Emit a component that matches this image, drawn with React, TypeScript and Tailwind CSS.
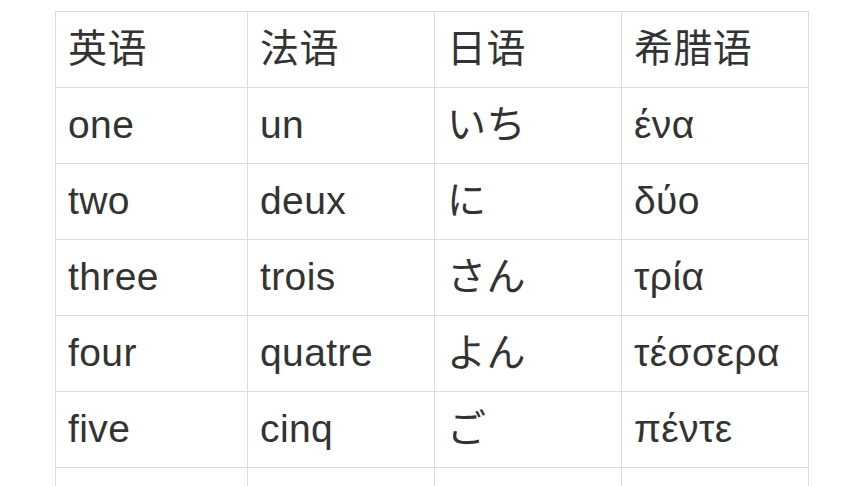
const rows: string[][] = [
  ["英语", "法语", "日语", "希腊语"],
  ["one", "un", "いち", "ένα"],
  ["two", "deux", "に", "δύο"],
  ["three", "trois", "さん", "τρία"],
  ["four", "quatre", "よん", "τέσσερα"],
  ["five", "cinq", "ご", "πέντε"],
  ["", "", "", ""],
];

const widths = ["w-[192px]", "w-[187px]", "w-[187px]", "w-[187px]"];

export default function App() {
  return (
    <div className="h-[486px] w-[864px] overflow-hidden bg-white pt-[11px] pl-[55px] font-['Liberation_Sans','Noto_Sans_CJK_SC',sans-serif] text-[#333333]">
      <table className="table-fixed border-collapse">
        <tbody>
          {rows.map((row, i) => (
            <tr key={i}>
              {row.map((cell, j) => (
                <td
                  key={j}
                  className={`${widths[j]} h-[76px] border border-[#dedede] pl-[12px] pb-[2px] align-middle text-[39px] leading-none tracking-[0.4px]`}
                >
                  {cell}
                </td>
              ))}
            </tr>
          ))}
        </tbody>
      </table>
    </div>
  );
}
